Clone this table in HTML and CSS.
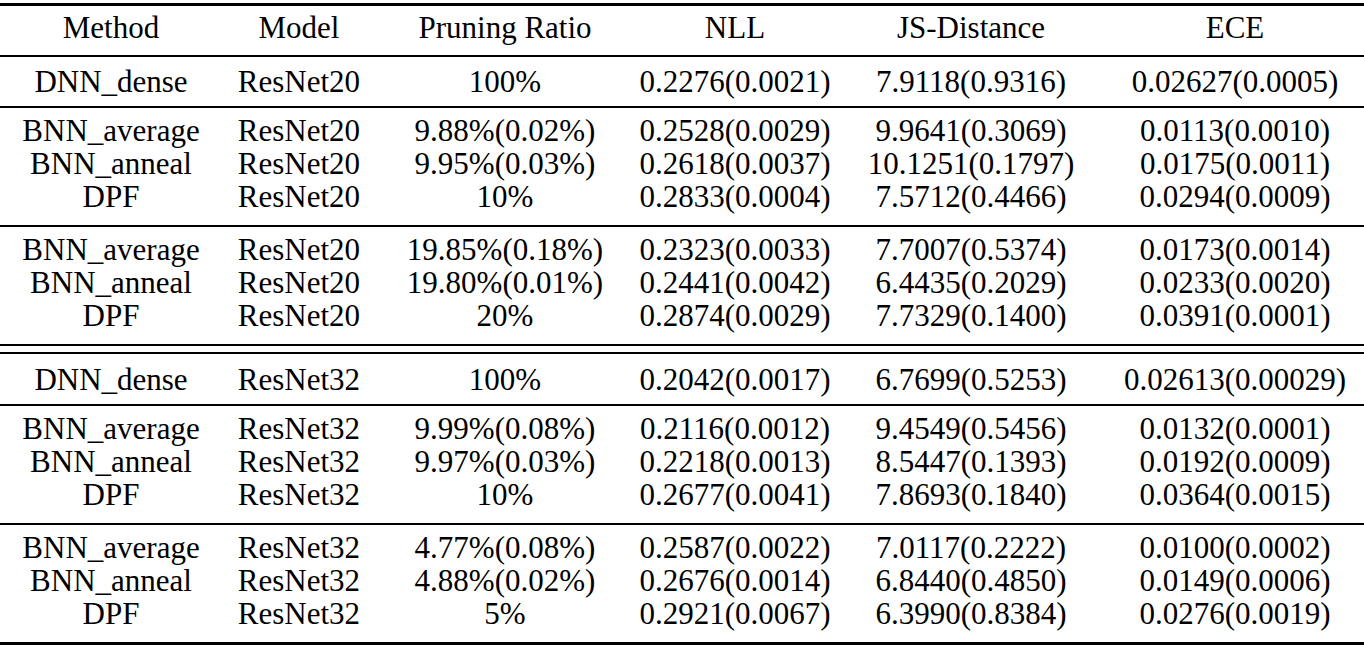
FILE: index.html
```html
<!DOCTYPE html>
<html lang="en">
<head>
<meta charset="utf-8">
<title>Results</title>
<link rel="stylesheet" href="styles.css">
</head>
<body>
<div class="table">
  <div class="section head">
    <div class="row"><span>Method</span><span>Model</span><span>Pruning Ratio</span><span>NLL</span><span>JS-Distance</span><span>ECE</span></div>
  </div>
  <div class="section single">
    <div class="row"><span>DNN_dense</span><span>ResNet20</span><span>100%</span><span>0.2276(0.0021)</span><span>7.9118(0.9316)</span><span>0.02627(0.0005)</span></div>
  </div>
  <div class="section group">
    <div class="row"><span>BNN_average</span><span>ResNet20</span><span>9.88%(0.02%)</span><span>0.2528(0.0029)</span><span>9.9641(0.3069)</span><span>0.0113(0.0010)</span></div>
    <div class="row"><span>BNN_anneal</span><span>ResNet20</span><span>9.95%(0.03%)</span><span>0.2618(0.0037)</span><span>10.1251(0.1797)</span><span>0.0175(0.0011)</span></div>
    <div class="row"><span>DPF</span><span>ResNet20</span><span>10%</span><span>0.2833(0.0004)</span><span>7.5712(0.4466)</span><span>0.0294(0.0009)</span></div>
  </div>
  <div class="section group before-double">
    <div class="row"><span>BNN_average</span><span>ResNet20</span><span>19.85%(0.18%)</span><span>0.2323(0.0033)</span><span>7.7007(0.5374)</span><span>0.0173(0.0014)</span></div>
    <div class="row"><span>BNN_anneal</span><span>ResNet20</span><span>19.80%(0.01%)</span><span>0.2441(0.0042)</span><span>6.4435(0.2029)</span><span>0.0233(0.0020)</span></div>
    <div class="row"><span>DPF</span><span>ResNet20</span><span>20%</span><span>0.2874(0.0029)</span><span>7.7329(0.1400)</span><span>0.0391(0.0001)</span></div>
  </div>
  <div class="section single after-double">
    <div class="row"><span>DNN_dense</span><span>ResNet32</span><span>100%</span><span>0.2042(0.0017)</span><span>6.7699(0.5253)</span><span>0.02613(0.00029)</span></div>
  </div>
  <div class="section group">
    <div class="row"><span>BNN_average</span><span>ResNet32</span><span>9.99%(0.08%)</span><span>0.2116(0.0012)</span><span>9.4549(0.5456)</span><span>0.0132(0.0001)</span></div>
    <div class="row"><span>BNN_anneal</span><span>ResNet32</span><span>9.97%(0.03%)</span><span>0.2218(0.0013)</span><span>8.5447(0.1393)</span><span>0.0192(0.0009)</span></div>
    <div class="row"><span>DPF</span><span>ResNet32</span><span>10%</span><span>0.2677(0.0041)</span><span>7.8693(0.1840)</span><span>0.0364(0.0015)</span></div>
  </div>
  <div class="section group last">
    <div class="row"><span>BNN_average</span><span>ResNet32</span><span>4.77%(0.08%)</span><span>0.2587(0.0022)</span><span>7.0117(0.2222)</span><span>0.0100(0.0002)</span></div>
    <div class="row"><span>BNN_anneal</span><span>ResNet32</span><span>4.88%(0.02%)</span><span>0.2676(0.0014)</span><span>6.8440(0.4850)</span><span>0.0149(0.0006)</span></div>
    <div class="row"><span>DPF</span><span>ResNet32</span><span>5%</span><span>0.2921(0.0067)</span><span>6.3990(0.8384)</span><span>0.0276(0.0019)</span></div>
  </div>
</div>
</body>
</html>
```
FILE: styles.css
```css
html, body {
  margin: 0;
  padding: 0;
  background: #ffffff;
}

body {
  font-family: "Liberation Serif", "Times New Roman", serif;
  font-size: 31px;
  color: #000000;
}

.table {
  width: 1364px;
  padding-top: 3px;
}

.section {
  border-bottom: 2px solid #000000;
}

.head {
  border-top: 3px solid #000000;
  padding: 5px 0 11px;
}

.single {
  padding: 8px 0 8px;
}

.group {
  padding: 6px 0 12px;
}

.before-double {
  padding-bottom: 12px;
}

.after-double {
  margin-top: 6px;
  border-top: 2px solid #000000;
  padding: 9px 0 8px;
}

.last {
  border-bottom-width: 3px;
}

.row {
  display: grid;
  grid-template-columns: 222px 154px 258px 202px 270px 258px;
  height: 33px;
  line-height: 33px;
}

.row span {
  text-align: center;
  white-space: nowrap;
}
```
